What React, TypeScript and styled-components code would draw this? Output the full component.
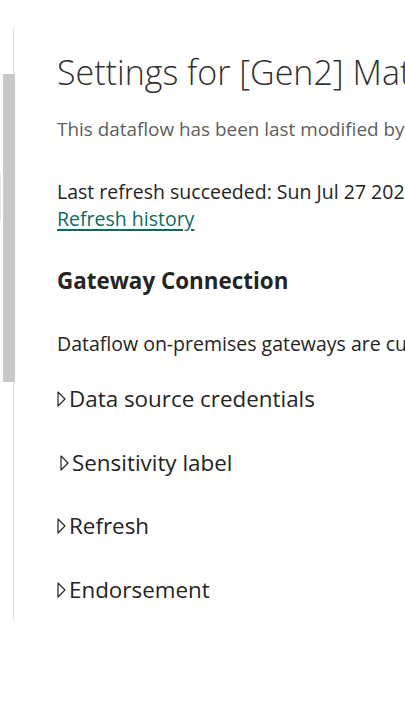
import styled, { createGlobalStyle } from "styled-components";

const GlobalStyle = createGlobalStyle`
  html, body {
    margin: 0;
    padding: 0;
    background: #ffffff;
    overflow: hidden;
  }
  body {
    font-family: "Open Sans", "Liberation Sans", sans-serif;
    color: #252423;
  }
`;

const Frame = styled.div`
  position: relative;
  width: 405px;
  height: 711px;
  overflow: hidden;
  padding-top: 29px;
  padding-left: 13px;
  box-sizing: border-box;
`;

const Scrollbar = styled.div`
  position: absolute;
  left: 3px;
  top: 74px;
  width: 12px;
  height: 308px;
  background: #c8c8c8;
`;

const EdgeMark = styled.div`
  position: absolute;
  left: 0;
  top: 173px;
  width: 1px;
  height: 48px;
  background: #e6e6e6;
`;

const Panel = styled.div`
  height: 590px;
  border-left: 1px solid #e1dfdd;
  padding-left: 43px;
  padding-top: 21px;
  box-sizing: border-box;
  white-space: nowrap;
  overflow: hidden;
`;

const Title = styled.h1`
  margin: 0;
  font-size: 34px;
  line-height: 44px;
  font-weight: 300;
  color: #323130;
`;

const Subtitle = styled.p`
  margin: 22px 0 0;
  font-size: 18.9px;
  line-height: 26px;
  color: #605e5c;
`;

const Status = styled.p`
  margin: 36px 0 0;
  font-size: 19.5px;
  line-height: 27px;
  color: #252423;
`;

const HistoryLink = styled.a`
  display: block;
  width: max-content;
  font-size: 19.5px;
  line-height: 28px;
  color: #0e6a5e;
  text-decoration: underline;
  text-decoration-thickness: 1.5px;
  text-underline-offset: 3px;
`;

const SectionTitle = styled.h2`
  margin: 33px 0 0;
  font-size: 22.4px;
  line-height: 30px;
  font-weight: 700;
  color: #252423;
`;

const Body = styled.p`
  margin: 34px 0 0;
  font-size: 19.5px;
  line-height: 27px;
`;

const Accordion = styled.div`
  margin-top: 27px;
  display: flex;
  flex-direction: column;
  gap: 33.5px;
`;

const Item = styled.div<{ $indent?: number }>`
  display: flex;
  align-items: center;
  gap: 3px;
  padding-left: ${(p) => p.$indent ?? 0}px;
  font-size: 22.4px;
  line-height: 30px;
  color: #252423;
`;

const Caret = () => (
  <svg width="9" height="16" viewBox="0 0 9 16" aria-hidden="true">
    <path d="M1 1 L8 8 L1 15 Z" fill="none" stroke="#252423" strokeWidth="1.2" strokeLinejoin="round" />
  </svg>
);

const items = [
  { label: "Data source credentials", indent: 0 },
  { label: "Sensitivity label", indent: 3 },
  { label: "Refresh", indent: 0 },
  { label: "Endorsement", indent: 0 },
];

export default function App() {
  return (
    <>
      <GlobalStyle />
      <Frame>
        <Panel>
          <Title>Settings for [Gen2] Material Planning</Title>
          <Subtitle>This dataflow has been last modified by someone</Subtitle>
          <Status>Last refresh succeeded: Sun Jul 27 2025</Status>
          <HistoryLink href="#">Refresh history</HistoryLink>
          <SectionTitle>Gateway Connection</SectionTitle>
          <Body>Dataflow on-premises gateways are currently</Body>
          <Accordion>
            {items.map((it) => (
              <Item key={it.label} $indent={it.indent}>
                <Caret />
                <span>{it.label}</span>
              </Item>
            ))}
          </Accordion>
        </Panel>
        <Scrollbar />
        <EdgeMark />
      </Frame>
    </>
  );
}
